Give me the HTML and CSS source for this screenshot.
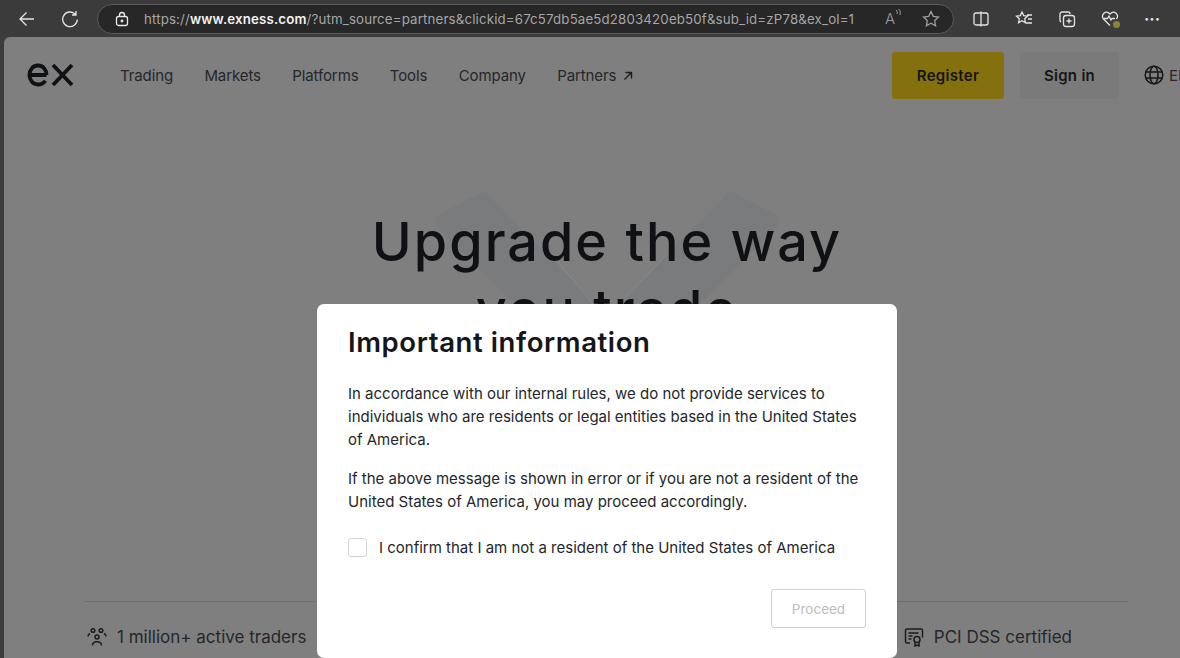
FILE: index.html
```html
<!DOCTYPE html>
<html lang="en">
<head>
    <meta charset="UTF-8">
    <title>Exness</title>
    <link rel="stylesheet" href="styles.css">
</head>
<body>

<!-- Browser toolbar -->
<div class="toolbar">
    <svg class="tool-icon back" viewBox="0 0 18 18"><path d="M16 9H2.500M8.500 2.500 2 9l6.500 6.500"/></svg>
    <svg class="tool-icon reload" viewBox="0 0 18 18"><path d="M14.500 4.500A7.300 7.300 0 1 0 16.300 9.500M15 1v4h-4"/></svg>
    <div class="address">
        <svg class="lock" viewBox="0 0 14 16"><rect x="1.500" y="5.500" width="11" height="9" rx="2"/><path d="M4.500 5.500V4a2.500 2.500 0 0 1 5 0v1.500"/><circle cx="7" cy="10" r=".8"/></svg>
        <span class="url">https://<b>www.exness.com</b>/?utm_source=partners&amp;clickid=67c57db5ae5d2803420eb50f&amp;sub_id=zP78&amp;ex_ol=1</span>
        <span class="read">A<svg viewBox="0 0 6 8"><path d="M1 1c1.500 1 1.500 3 1 4M3.500 0c2 1.500 2 4 1.500 6"/></svg></span>
        <svg class="tool-icon star" viewBox="0 0 18 18"><path d="m9 1.500 2.300 4.800 5.200.7-3.800 3.600.9 5.200L9 13.300l-4.600 2.500.9-5.200L1.500 7l5.200-.7z"/></svg>
    </div>
    <div class="tools">
        <svg class="tool-icon" viewBox="0 0 18 18"><rect x="2" y="3" width="14" height="12" rx="2"/><path d="M9 1.500v15"/></svg>
        <svg class="tool-icon" viewBox="0 0 18 18"><path d="m7 2 1.700 3.600 3.800.5-2.800 2.700.7 3.900L7 10.800l-3.400 1.900.7-3.900L1.500 6.100l3.800-.5zM12 5h5M13 9h4M11 13h6"/></svg>
        <svg class="tool-icon" viewBox="0 0 18 18"><path d="M3 12a2 2 0 0 1-1-2V4a2 2 0 0 1 2-2h6a2 2 0 0 1 2 2"/><rect x="5.500" y="5.500" width="11" height="11" rx="2.500"/><path d="M11 8.500v5M8.500 11h5"/></svg>
        <span class="health">
            <svg class="tool-icon" viewBox="0 0 18 18"><path d="M9 15.500 2.500 9C-.5 5 4.500-.5 9 4c4.500-4.500 9.500 1 6.500 5M3 8.500h3.500L8 6l2 4 1-1.500h3"/></svg>
            <i class="health-dot"></i>
        </span>
        <span class="more">···</span>
    </div>
</div>

<div class="page">

    <!-- Site header -->
    <header class="site-header">
        <svg class="logo" viewBox="0 0 47 24"><path d="M19.500 12H2.500C2.500 6.500 6 2.500 11 2.500s8.500 4 8.500 9.500M2.500 12c0 5.500 3.500 9.500 8.500 9.500 3.200 0 5.700-1.300 7.300-3.800"/><path d="m26 2 19 20M45 2 26 22"/></svg>
        <nav class="nav">
            <a>Trading</a>
            <a>Markets</a>
            <a>Platforms</a>
            <a>Tools</a>
            <a>Company</a>
            <a>Partners <svg class="arrow" viewBox="0 0 10 10"><path d="M1.500 8.500 8.500 1.500M2.500 1.500h6v6"/></svg></a>
        </nav>
        <div class="actions">
            <button class="btn btn-register">Register</button>
            <button class="btn btn-signin">Sign in</button>
            <span class="lang">
                <svg class="globe" viewBox="0 0 20 20"><circle cx="10" cy="10" r="8.800"/><ellipse cx="10" cy="10" rx="4" ry="8.800"/><path d="M1.500 7h17M1.500 13h17"/></svg>
                EN
            </span>
        </div>
    </header>

    <!-- Hero -->
    <section class="hero">
        <svg class="hero-x" viewBox="0 0 360 170"><path d="M54 6 172 125 130 165 8 43Q2 35 10 29z"/><path d="M300 6 182 125 224 165 346 43Q352 35 344 29z"/><path class="hero-line" d="M123 71 165 121M238 68 188 121"/></svg>
        <h1>Upgrade the way<br>you trade</h1>
    </section>

    <!-- Bottom stats -->
    <div class="stats">
        <div class="stat">
            <svg class="stat-icon" viewBox="0 0 20 20"><circle cx="6" cy="3.500" r="1.800"/><circle cx="14" cy="3.500" r="1.800"/><circle cx="10" cy="10" r="2"/><path d="M1 9.500c0-1.500 1-2.500 2-3M19 9.500c0-1.500-1-2.500-2-3M5.500 18.500c0-5 9-5 9 0"/></svg>
            1 million+ active traders
        </div>
        <div class="stat">
            <svg class="stat-icon" viewBox="0 0 20 20"><path d="M6 16H3a1.500 1.500 0 0 1-1.500-1.500v-11A1.500 1.500 0 0 1 3 2h14a1.500 1.500 0 0 1 1.500 1.500v7M4.500 6h10M4.500 9h4M4.500 12h3"/><circle cx="13" cy="12.500" r="3"/><path d="M11 15v4l2-1 2 1v-4"/></svg>
            PCI DSS certified
        </div>
    </div>
</div>

<!-- Dialog -->
<div class="modal">
    <h2>Important information</h2>
    <p>In accordance with our internal rules, we do not provide services to individuals who are residents or legal entities based in the United States of America.</p>
    <p>If the above message is shown in error or if you are not a resident of the United States of America, you may proceed accordingly.</p>
    <label class="confirm"><span class="checkbox"></span>I confirm that I am not a resident of the United States of America</label>
    <div class="modal-footer">
        <button class="btn-proceed">Proceed</button>
    </div>
</div>

</body>
</html>
```

FILE: styles.css
```css
html, body {
    margin: 0;
    padding: 0;
    height: 658px;
    overflow: hidden;
}
body {
    position: relative;
    width: 1180px;
    background-color: #3c3c3c;
    font-family: Inter, "Liberation Sans", sans-serif;
    color: #141619;
}

/* toolbar */
.toolbar {
    display: flex;
    align-items: center;
    height: 37px;
    padding-left: 18px;
    box-sizing: border-box;
    background-color: #3b3b3b;
}
.tool-icon {
    width: 18px;
    height: 18px;
    fill: none;
    stroke: #e4e4e4;
    stroke-width: 1.300;
    flex-shrink: 0;
}
.reload {
    margin-left: 25px;
}
.address {
    display: flex;
    align-items: center;
    width: 857px;
    height: 30px;
    margin-left: 18px;
    padding-left: 17px;
    box-sizing: border-box;
    background-color: #272727;
    border: 1px solid #5a5a5a;
    border-radius: 15px;
}
.lock {
    width: 14px;
    height: 16px;
    fill: none;
    stroke: #e8e8e8;
    stroke-width: 1.300;
    flex-shrink: 0;
}
.url {
    margin-left: 15px;
    width: 728px;
    flex-shrink: 0;
    font-size: 13.270px;
    letter-spacing: 0.160px;
    color: #a6a6a6;
    white-space: nowrap;
    overflow: hidden;
}
.url b {
    font-weight: 600;
    color: #f2f2f2;
}
.read {
    display: flex;
    margin-left: 13px;
    font-size: 15px;
    font-weight: 300;
    color: #9c9c9c;
}
.read svg {
    width: 6px;
    height: 8px;
    fill: none;
    stroke: #9c9c9c;
}
.star {
    margin-left: 21px;
    stroke: #9c9c9c;
}
.tools {
    display: flex;
    align-items: center;
    gap: 25px;
    margin-left: 18px;
}
.health {
    position: relative;
    display: flex;
}
.health-dot {
    position: absolute;
    right: -1px;
    bottom: 0;
    width: 7px;
    height: 7px;
    border-radius: 50%;
    background-color: #8a8433;
}
.more {
    color: #e4e4e4;
    font-size: 16px;
    font-weight: 700;
    line-height: 18px;
}

/* page behind the dim layer */
.page {
    position: relative;
    height: 621px;
    margin-left: 4px;
    background-color: #7f7f7f;
    border-top-left-radius: 6px;
    overflow: hidden;
}
.site-header {
    display: flex;
    align-items: center;
    height: 76px;
    padding-left: 23px;
}
.logo {
    width: 47px;
    height: 24px;
    flex-shrink: 0;
    fill: none;
    stroke: #0f1114;
    stroke-width: 3.800;
}
.nav {
    display: flex;
    gap: 31.300px;
    width: 772px;
    flex-shrink: 0;
    margin-left: 46px;
    font-size: 15px;
    letter-spacing: -0.100px;
    color: #24272b;
}
.nav a {
    white-space: nowrap;
}
.arrow {
    width: 10px;
    height: 10px;
    margin-left: 3px;
    fill: none;
    stroke: #1b1d20;
    stroke-width: 1.400;
}
.actions {
    display: flex;
    align-items: center;
    flex-shrink: 0;
}
.btn {
    height: 47px;
    border: none;
    border-radius: 3px;
    font-family: Inter, sans-serif;
    font-size: 15px;
    font-weight: 600;
    letter-spacing: 0.300px;
    color: #141619;
}
.btn-register {
    width: 112px;
    background-color: #84700c;
}
.btn-signin {
    width: 99px;
    margin-left: 16px;
    background-color: #7a7a7a;
}
.lang {
    display: flex;
    align-items: center;
    gap: 5px;
    margin-left: 25px;
    font-size: 15px;
    color: #24272b;
    white-space: nowrap;
}
.globe {
    width: 20px;
    height: 20px;
    fill: none;
    stroke: #141619;
    stroke-width: 1.500;
}

/* hero */
.hero {
    position: relative;
    height: 160px;
    margin-top: 95px;
    padding-left: 30px;
    text-align: center;
}
.hero-x {
    position: absolute;
    left: 426px;
    top: -23px;
    width: 360px;
    height: 170px;
    fill: #797b7c;
}
.hero-line {
    fill: none;
    stroke: #8a8a8a;
}
h1 {
    position: relative;
    margin: 0;
    font-family: Inter, sans-serif;
    font-size: 54px;
    font-weight: 500;
    line-height: 68px;
    letter-spacing: 2px;
    color: #0f1114;
}

/* stats row */
.stats {
    position: absolute;
    left: 80px;
    right: 52px;
    top: 564px;
    display: flex;
    justify-content: space-between;
    padding: 25px 56px 0 3px;
    border-top: 1px solid #707070;
}
.stat {
    display: flex;
    align-items: center;
    gap: 10px;
    font-size: 17px;
    color: #24272b;
}
.stat-icon {
    width: 20px;
    height: 20px;
    fill: none;
    stroke: #1b1d20;
    stroke-width: 1.500;
}

/* dialog */
.modal {
    position: absolute;
    left: 317px;
    top: 304px;
    width: 580px;
    height: 354px;
    box-sizing: border-box;
    padding: 21px 31px 0;
    background-color: white;
    border-radius: 7px;
}
.modal h2 {
    margin: 0 0 23px;
    font-family: Inter, sans-serif;
    font-size: 27.500px;
    font-weight: 600;
    line-height: 34px;
    letter-spacing: 0.600px;
    color: #141619;
}
.modal p {
    margin: 0 0 16px;
    font-size: 15px;
    line-height: 23px;
    color: #24272b;
}
.confirm {
    display: flex;
    align-items: center;
    margin-top: 25px;
    font-size: 15px;
    color: #24272b;
}
.checkbox {
    width: 17px;
    height: 17px;
    margin-right: 12px;
    border: 1px solid #d4d4d4;
    border-radius: 3px;
}
.modal-footer {
    display: flex;
    justify-content: flex-end;
    margin-top: 32px;
}
.btn-proceed {
    width: 95px;
    height: 39px;
    background-color: white;
    border: 1px solid #d0d0d0;
    border-radius: 3px;
    font-family: Inter, sans-serif;
    font-size: 13.500px;
    color: #bdbdbd;
}
```
